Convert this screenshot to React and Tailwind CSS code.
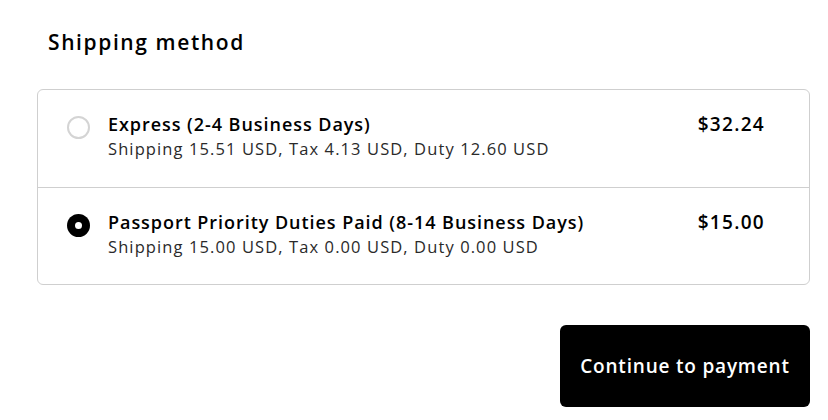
import React, { useState } from 'react';

const options = [
  {
    id: 'express',
    name: 'Express (2-4 Business Days)',
    detail: 'Shipping 15.51 USD, Tax 4.13 USD, Duty 12.60 USD',
    price: '$32.24',
  },
  {
    id: 'passport',
    name: 'Passport Priority Duties Paid (8-14 Business Days)',
    detail: 'Shipping 15.00 USD, Tax 0.00 USD, Duty 0.00 USD',
    price: '$15.00',
  },
];

export default function App() {
  const [selected, setSelected] = useState('passport');

  return (
    <div className="w-[828px] h-[420px] bg-white text-black pt-[26px] pl-[37px] pr-[18px] font-['Open_Sans',sans-serif]">
      <h2 className="pl-[11px] text-[21px] font-semibold leading-[32px] tracking-[1.6px]">Shipping method</h2>

      <div className="mt-[31px] border border-[#cfcfcf] rounded-[6px]">
        {options.map((opt, i) => (
          <button
            key={opt.id}
            onClick={() => setSelected(opt.id)}
            className={`w-full flex items-start text-left pl-[29px] pr-[44px] pt-[21px] h-[97px] ${
              i > 0 ? 'border-t border-[#cfcfcf]' : ''
            }`}
          >
            <span
              className={`mt-[5px] w-[23px] h-[23px] rounded-full shrink-0 flex items-center justify-center ${
                selected === opt.id ? 'bg-black' : 'border-2 border-[#d4d4d4]'
              }`}
            >
              {selected === opt.id && <span className="w-[7px] h-[7px] rounded-full bg-white" />}
            </span>
            <div className="flex-1 ml-[18px]">
              <div className="text-[18px] font-semibold leading-[26px] tracking-[0.95px]">{opt.name}</div>
              <div className="text-[16.5px] leading-[24px] text-[#2a2a2a] tracking-[1.1px]">{opt.detail}</div>
            </div>
            <div className="text-[19px] font-semibold leading-[26px] tracking-[1.3px]">{opt.price}</div>
          </button>
        ))}
      </div>

      <div className="flex justify-end mt-[40px]">
        <button className="w-[250px] h-[82px] bg-black text-white rounded-[6px] text-[19px] font-semibold tracking-[0.8px]">
          Continue to payment
        </button>
      </div>
    </div>
  );
}
